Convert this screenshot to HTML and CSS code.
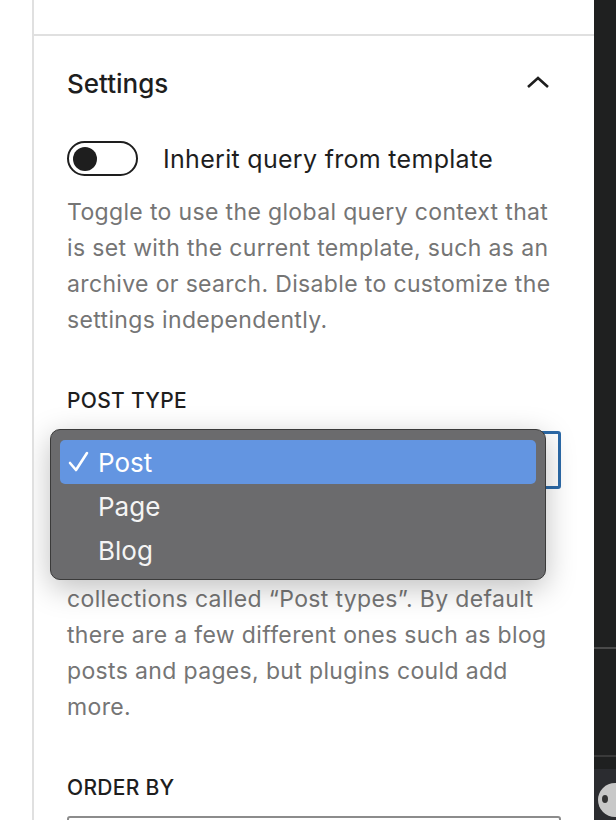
FILE: index.html
```html
<!DOCTYPE html>
<html lang="en">
<head>
  <meta charset="UTF-8">
  <meta name="viewport" content="width=device-width, initial-scale=1.0">
  <title>Query settings</title>
  <link rel="stylesheet" href="styles.css">
</head>
<body>

<div class="gutter"></div>

<div class="sidebar">
  <div class="top-bar"></div>

  <div class="panel">
    <div class="panel-header">
      <h2>Settings</h2>
      <svg class="chevron" width="24" height="24" viewBox="0 0 24 24">
        <path d="M2 16 L12 7 L22 16" fill="none" stroke="#1e1e1e" stroke-width="2.6"/>
      </svg>
    </div>

    <div class="toggle-row">
      <span class="toggle"><span class="knob"></span></span>
      <label>Inherit query from template</label>
    </div>
    <p class="help">Toggle to use the global query context that is set with the current template, such as an archive or search. Disable to customize the settings independently.</p>

    <div class="field">
      <div class="field-label">Post type</div>
      <div class="select-wrap">
        <div class="select"></div>
        <ul class="menu">
          <li class="selected">
            <span class="check">
              <svg width="22" height="22" viewBox="0 0 22 22">
                <path d="M2 12 L8 19 L19 2" fill="none" stroke="#fff" stroke-width="2.6" stroke-linecap="round" stroke-linejoin="round"/>
              </svg>
            </span>Post
          </li>
          <li><span class="check"></span>Page</li>
          <li><span class="check"></span>Blog</li>
        </ul>
      </div>
      <p class="help after-select">WordPress contains different types of content and they are divided into<br>collections called “Post types”. By default there are a few different ones such as blog posts and pages, but plugins could add more.</p>
    </div>

    <div class="field">
      <div class="field-label">Order by</div>
      <div class="select plain"></div>
    </div>
  </div>
</div>

<div class="rail">
  <div class="rail-a"></div>
  <div class="rail-b"></div>
  <div class="rail-c"><span class="avatar"><span class="eye"></span></span></div>
</div>

</body>
</html>
```

FILE: styles.css
```css
html, body {
  margin: 0;
  padding: 0;
}

body {
  width: 616px;
  height: 820px;
  overflow: hidden;
  display: flex;
  background: #fff;
  font-family: Inter, "Noto Sans", sans-serif;
  color: #1e1e1e;
}

.gutter {
  width: 32px;
  flex-shrink: 0;
}

.sidebar {
  flex: 1;
  border-left: 2px solid #e0e0e0;
  min-width: 0;
  overflow: hidden;
}

.top-bar {
  height: 34px;
  border-bottom: 2px solid #e0e0e0;
}

.panel {
  padding: 0 33px 0 33px;
}

.panel-header {
  display: flex;
  align-items: center;
  justify-content: space-between;
  height: 94px;
}

.panel-header h2 {
  margin: 0;
  font-size: 26px;
  font-weight: 500;
}

.chevron {
  margin-right: 11px;
}

.toggle-row {
  display: flex;
  align-items: center;
  gap: 25px;
  margin-top: 11px;
}

.toggle {
  width: 71px;
  height: 35px;
  box-sizing: border-box;
  border: 2px solid #1e1e1e;
  border-radius: 18px;
  display: flex;
  align-items: center;
  padding-left: 4px;
}

.knob {
  width: 24px;
  height: 24px;
  border-radius: 50%;
  background: #1e1e1e;
}

.toggle-row label {
  font-size: 25px;
  letter-spacing: 0.3px;
}

.help {
  margin: 18px 0 0;
  font-size: 23px;
  line-height: 36px;
  letter-spacing: 0.35px;
  color: #757575;
}

.help.after-select {
  margin-top: 20px;
}

.field {
  margin-top: 51px;
}

.field-label {
  font-size: 21px;
  font-weight: 500;
  text-transform: uppercase;
  letter-spacing: 0.3px;
  line-height: 24px;
}

.select-wrap {
  position: relative;
  margin-top: 18px;
}

.select {
  height: 58px;
  box-sizing: border-box;
  border: 3px solid #2c6aa8;
  border-radius: 3px;
  margin-top: 16px;
}

.select-wrap .select {
  margin-top: 0;
}

.select.plain {
  border-color: #8c8c8c;
  border-width: 2px;
}

.menu {
  position: absolute;
  left: -17px;
  top: -2px;
  width: 496px;
  height: 151px;
  box-sizing: border-box;
  margin: 0;
  padding: 10px 9px;
  list-style: none;
  background: #6b6b6d;
  border: 1px solid #3a3a3a;
  border-radius: 10px;
  box-shadow: 0 8px 30px rgba(0, 0, 0, 0.25);
}

.menu li {
  display: flex;
  align-items: center;
  height: 44px;
  color: #f4f4f4;
  font-size: 26px;
  border-radius: 5px;
  padding-left: 8px;
}

.menu li.selected {
  background: #6395e1;
  color: #fff;
}

.check {
  width: 30px;
  display: flex;
  align-items: center;
}

.rail {
  width: 22px;
  flex-shrink: 0;
  background: #1f2020;
  display: flex;
  flex-direction: column;
}

.rail-a {
  height: 647px;
  border-bottom: 2px solid #4a4a4a;
}

.rail-b {
  height: 106px;
  border-bottom: 2px solid #3a3a3a;
}

.rail-c {
  flex: 1;
  background: #2b2c30;
  margin-top: 12px;
  position: relative;
  overflow: hidden;
}

.avatar {
  position: absolute;
  left: 4px;
  top: 14px;
  width: 34px;
  height: 34px;
  border-radius: 50%;
  background: #c8c8c8;
}

.eye {
  position: absolute;
  left: 4px;
  top: 12px;
  width: 6px;
  height: 8px;
  border-radius: 50%;
  background: #333;
}
```
